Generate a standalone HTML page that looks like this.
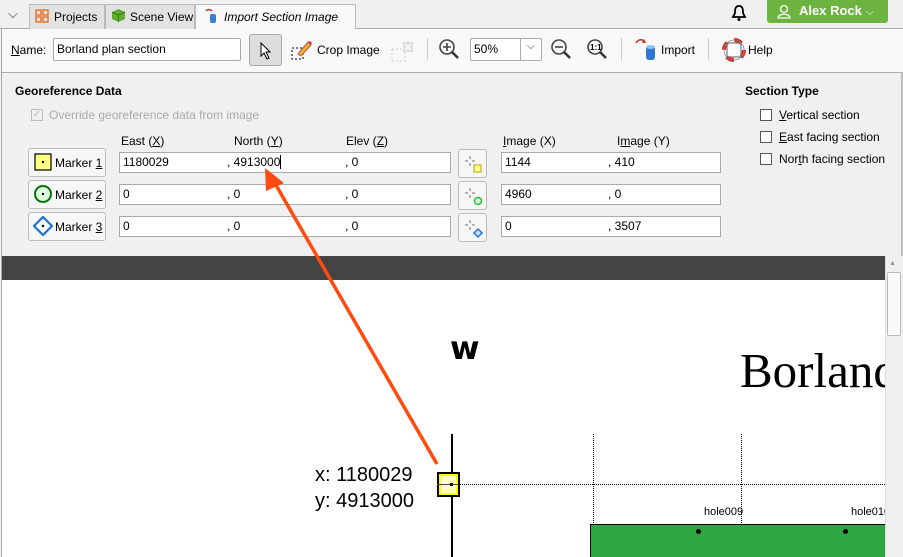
<!DOCTYPE html>
<html><head><meta charset="utf-8"><style>
*{box-sizing:border-box;margin:0;padding:0}
body{width:903px;height:557px;overflow:hidden;background:#f0f0f0;font-family:"Liberation Sans",sans-serif;font-size:12px;color:#000;position:relative}
.a{position:absolute}
.tab{position:absolute;top:4px;height:25px;border:1px solid #bbb;border-bottom:none;background:#e2e2e2;font-size:12px;line-height:24px;padding-left:24px}
.inp{position:absolute;height:21px;background:#fff;border:1px solid #aaa;font-size:12px;line-height:19px;padding-left:3px}
.btn{position:absolute;background:#f6f6f6;border:1px solid #bbb;border-radius:3px}
.lab{position:absolute;font-size:12px}
u{text-decoration:underline}
</style></head><body>
<div class="a" style="left:0;top:0;width:903px;height:29px;background:#f0f0f0;border-bottom:1px solid #aaa"></div>
<div class="a" style="left:8px;top:6px;font-size:13px;color:#333">⌵</div>
<div class="tab" style="left:29px;width:76px">Projects</div>
<svg class="a" style="left:35px;top:9px" width="14" height="14"><g fill="none" stroke="#e8752a" stroke-width="1.5"><rect x="1" y="1" width="5" height="5"/><rect x="8" y="1" width="5" height="5"/><rect x="1" y="8" width="5" height="5"/><rect x="8" y="8" width="5" height="5"/></g></svg>
<div class="tab" style="left:105px;width:90px">Scene View</div>
<svg class="a" style="left:111px;top:8px" width="15" height="15"><path d="M7.5 1 L14 4 L14 11 L7.5 14 L1 11 L1 4Z" fill="#5fae2e"/><path d="M1 4 L7.5 7 L14 4 M7.5 7 V14" stroke="#3d7c1a" fill="none"/></svg>
<div class="tab" style="left:195px;width:161px;background:#f8f8f8;height:27px;font-style:italic;padding-left:28px">Import Section Image <span style="font-style:normal;margin-left:4px">✕</span></div>
<svg class="a" style="left:204px;top:8px" width="14" height="16"><path d="M2 3 Q5 0 8 3" stroke="#c0392b" fill="none" stroke-width="1.5"/><rect x="6" y="6" width="6" height="9" rx="2" fill="#3a7fd0"/></svg>
<svg class="a" style="left:731px;top:4px" width="16" height="18"><path d="M8 2 C4 2 4 6 4 9 L2 13 H14 L12 9 C12 6 12 2 8 2Z" fill="none" stroke="#000" stroke-width="1.8"/><circle cx="8" cy="15.5" r="1.5"/></svg>
<div class="a" style="left:767px;top:0;width:121px;height:23px;background:#6cb33f;border-radius:0 0 3px 3px;color:#fff;font-weight:bold;font-size:13px;line-height:22px;padding-left:32px">Alex Rock <span style="font-weight:normal;font-size:11px">⌵</span></div>
<svg class="a" style="left:777px;top:4px" width="14" height="15"><circle cx="7" cy="5" r="3.5" fill="none" stroke="#fff" stroke-width="1.3"/><path d="M1 14 C1 9 13 9 13 14Z" fill="none" stroke="#fff" stroke-width="1.3"/></svg>
<div class="a" style="left:1px;top:29px;width:902px;height:43px;background:#f8f8f8;border-left:1px solid #aaa"></div>
<div class="lab" style="left:11px;top:43px"><u>N</u>ame:</div>
<div class="inp" style="left:53px;top:38px;width:188px;height:23px;border-radius:2px;line-height:21px">Borland plan section</div>
<div class="btn" style="left:249px;top:34px;width:33px;height:32px;background:#ddd;border-color:#aaa"></div>
<svg class="a" style="left:259px;top:42px" width="14" height="18"><path d="M2 1 L2 14 L5 11 L8 17 L10 16 L7 10 L11 10Z" fill="#fff" stroke="#000"/></svg>
<svg class="a" style="left:290px;top:38px" width="24" height="24"><rect x="2" y="10" width="11" height="11" fill="none" stroke="#000" stroke-dasharray="2,2"/><path d="M8 16 L18 4 L21 7 L11 18Z" fill="#f5b324" stroke="#a55"/><path d="M18 4 L21 7 L22 5 L20 3Z" fill="#d33"/></svg>
<div class="lab" style="left:317px;top:43px">Crop Image</div>
<svg class="a" style="left:391px;top:41px" width="24" height="22"><rect x="1" y="8" width="13" height="12" fill="none" stroke="#ccc" stroke-dasharray="2,2"/><rect x="12" y="1" width="10" height="10" fill="#ddd"/><path d="M14 3 L20 9 M20 3 L14 9" stroke="#fff" stroke-width="1.5"/></svg>
<div class="a" style="left:427px;top:38px;width:1px;height:22px;background:#ccc"></div>
<svg class="a" style="left:438px;top:38px" width="24" height="24"><circle cx="9" cy="9" r="7" fill="none" stroke="#444" stroke-width="1.6"/><path d="M5 9 H13 M9 5 V13" stroke="#444" stroke-width="1.6"/><path d="M14 14 L20 20" stroke="#333" stroke-width="2.5"/></svg>
<div class="inp" style="left:470px;top:38px;width:72px;height:23px;border-radius:2px;line-height:21px">50%</div>
<div class="a" style="left:520px;top:39px;width:1px;height:21px;background:#aaa"></div>
<div class="a" style="left:527px;top:41px;font-size:10px;color:#333">⌵</div>
<svg class="a" style="left:550px;top:38px" width="24" height="24"><circle cx="9" cy="9" r="7" fill="none" stroke="#444" stroke-width="1.6"/><path d="M5 9 H13" stroke="#444" stroke-width="1.6"/><path d="M14 14 L20 20" stroke="#333" stroke-width="2.5"/></svg>
<svg class="a" style="left:586px;top:38px" width="24" height="24"><circle cx="9" cy="9" r="7" fill="none" stroke="#444" stroke-width="1.6"/><text x="4" y="12" font-size="8" font-family="Liberation Sans" font-weight="bold">1:1</text><path d="M14 14 L20 20" stroke="#333" stroke-width="2.5"/></svg>
<div class="a" style="left:621px;top:38px;width:1px;height:22px;background:#ccc"></div>
<svg class="a" style="left:633px;top:37px" width="26" height="26"><path d="M3 6 Q7 0 12 5" stroke="#c0392b" fill="none" stroke-width="1.6"/><path d="M11 2 L13 6 L9 6Z" fill="#c0392b"/><rect x="13" y="9" width="9" height="14" rx="3" fill="#2f78d0"/><ellipse cx="17.5" cy="10" rx="4.5" ry="2" fill="#8ec1ff"/></svg>
<div class="lab" style="left:661px;top:43px">Import</div>
<div class="a" style="left:708px;top:38px;width:1px;height:22px;background:#ccc"></div>
<svg class="a" style="left:722px;top:38px" width="24" height="24"><circle cx="12" cy="12" r="10" fill="#fff" stroke="#d22" stroke-width="4" stroke-dasharray="8,7.7"/><circle cx="12" cy="12" r="10" fill="none" stroke="#888" stroke-width="0.8"/><rect x="5" y="5" width="14" height="14" fill="none" stroke="#777" stroke-width="1.2"/></svg>
<div class="lab" style="left:748px;top:43px">Help</div>
<div class="a" style="left:1px;top:72px;width:902px;height:184px;background:#f0f0f0;border-top:1px solid #aaa;border-left:1px solid #aaa"></div>
<div class="lab" style="left:15px;top:84px;font-weight:bold">Georeference Data</div>
<div class="a" style="left:31px;top:109px;width:12px;height:12px;border:1px solid #bbb;color:#bbb;font-size:10px;line-height:10px;text-align:center">✓</div>
<div class="lab" style="left:49px;top:108px;color:#aaa">Override georeference data from image</div>
<div class="lab" style="left:121px;top:134px">East (<u>X</u>)</div>
<div class="lab" style="left:234px;top:134px">North (<u>Y</u>)</div>
<div class="lab" style="left:346px;top:134px">Elev (<u>Z</u>)</div>
<div class="lab" style="left:503px;top:134px"><u>I</u>mage (X)</div>
<div class="lab" style="left:617px;top:134px">I<u>m</u>age (Y)</div>
<div class="btn" style="left:28px;top:148px;width:78px;height:29px"></div>
<div class="btn" style="left:28px;top:180px;width:78px;height:29px"></div>
<div class="btn" style="left:28px;top:212px;width:78px;height:29px"></div>
<svg class="a" style="left:33px;top:152px" width="20" height="20"><rect x="2" y="2" width="16" height="16" fill="#ffff80" stroke="#000" stroke-width="1.2"/><circle cx="10" cy="10" r="1.2"/></svg>
<svg class="a" style="left:33px;top:184px" width="20" height="20"><circle cx="10" cy="10" r="8" fill="#dfd" stroke="#2a2" stroke-width="2.2"/><circle cx="10" cy="10" r="8" fill="none" stroke="#000" stroke-width="0.6"/><circle cx="10" cy="10" r="1.2"/></svg>
<svg class="a" style="left:33px;top:216px" width="20" height="20"><path d="M10 1 L19 10 L10 19 L1 10Z" fill="#fff" stroke="#1a6fd6" stroke-width="2.2"/><circle cx="10" cy="10" r="1.2"/></svg>
<div class="lab" style="left:55px;top:156px">Marker <u>1</u></div>
<div class="lab" style="left:55px;top:188px">Marker <u>2</u></div>
<div class="lab" style="left:55px;top:220px">Marker <u>3</u></div>
<div class="inp" style="left:119px;top:152px;width:332px">1180029<span class="a" style="left:107px">, 4913000<span style="display:inline-block;width:1px;height:14px;background:#000;vertical-align:-3px"></span></span><span class="a" style="left:225px">, 0</span></div>
<div class="inp" style="left:119px;top:184px;width:332px">0<span class="a" style="left:107px">, 0</span><span class="a" style="left:225px">, 0</span></div>
<div class="inp" style="left:119px;top:216px;width:332px">0<span class="a" style="left:107px">, 0</span><span class="a" style="left:225px">, 0</span></div>
<div class="btn" style="left:458px;top:149px;width:29px;height:29px"></div>
<div class="btn" style="left:458px;top:181px;width:29px;height:29px"></div>
<div class="btn" style="left:458px;top:213px;width:29px;height:29px"></div>
<svg class="a" style="left:462px;top:153px" width="22" height="22"><path d="M8 3 V6 M8 10 V13 M3 8 H6 M10 8 H13" stroke="#777"/><rect x="12" y="12" width="7" height="7" fill="#ffff90" stroke="#aa0"/></svg>
<svg class="a" style="left:462px;top:185px" width="22" height="22"><path d="M8 3 V6 M8 10 V13 M3 8 H6 M10 8 H13" stroke="#777"/><circle cx="16" cy="16" r="3.5" fill="#dfd" stroke="#3b3" stroke-width="1.5"/></svg>
<svg class="a" style="left:462px;top:217px" width="22" height="22"><path d="M8 3 V6 M8 10 V13 M3 8 H6 M10 8 H13" stroke="#777"/><path d="M16 12 L20 16 L16 20 L12 16Z" fill="#cdf" stroke="#27d" stroke-width="1.5"/></svg>
<div class="inp" style="left:501px;top:152px;width:220px">1144<span class="a" style="left:106px">, 410</span></div>
<div class="inp" style="left:501px;top:184px;width:220px">4960<span class="a" style="left:106px">, 0</span></div>
<div class="inp" style="left:501px;top:216px;width:220px">0<span class="a" style="left:106px">, 3507</span></div>
<div class="lab" style="left:745px;top:84px;font-weight:bold">Section Type</div>
<div class="a" style="left:760px;top:109px;width:12px;height:12px;border:1px solid #555;background:#fff"></div>
<div class="a" style="left:760px;top:131px;width:12px;height:12px;border:1px solid #555;background:#fff"></div>
<div class="a" style="left:760px;top:153px;width:12px;height:12px;border:1px solid #555;background:#fff"></div>
<div class="lab" style="left:779px;top:108px"><u>V</u>ertical section</div>
<div class="lab" style="left:779px;top:130px"><u>E</u>ast facing section</div>
<div class="lab" style="left:779px;top:152px">Nor<u>t</u>h facing section</div>
<div class="a" style="left:901px;top:72px;width:2px;height:184px;background:#bbb"></div>
<div class="a" style="left:1px;top:256px;width:884px;height:301px;background:#fff;border-left:1px solid #aaa"></div>
<div class="a" style="left:2px;top:256px;width:883px;height:24px;background:#444"></div>
<div class="a" style="left:885px;top:256px;width:18px;height:301px;background:#f0f0f0;border-left:1px solid #ddd"></div>
<div class="a" style="left:887px;top:272px;width:14px;height:64px;background:#fafafa;border:1px solid #bbb;border-radius:2px"></div>
<div class="a" style="left:889px;top:260px;font-size:7px;color:#999">▲</div>
<div class="a" style="left:450px;top:330px;font-family:'DejaVu Sans',sans-serif;font-weight:bold;font-size:32px;line-height:36px">w</div>
<div class="a" style="left:740px;top:344px;font-family:'Liberation Serif',serif;font-size:49px;line-height:54px;width:145px;overflow:hidden;white-space:nowrap">Borland</div>
<div class="a" style="left:315px;top:462px;font-size:20px;line-height:26px">x: 1180029<br>y: 4913000</div>
<div class="a" style="left:451px;top:434px;width:2px;height:123px;background:#000"></div>
<div class="a" style="left:437px;top:484px;width:448px;border-top:1px dotted #000"></div>
<div class="a" style="left:593px;top:434px;height:123px;border-left:1px dotted #000"></div>
<div class="a" style="left:741px;top:434px;height:123px;border-left:1px dotted #000"></div>
<div class="a" style="left:590px;top:524px;width:295px;height:33px;background:#2ea641;border-top:1px solid #000;border-left:1px solid #000"></div>
<div class="a" style="left:696px;top:529px;width:5px;height:5px;border-radius:50%;background:#000"></div>
<div class="a" style="left:843px;top:529px;width:5px;height:5px;border-radius:50%;background:#000"></div>
<div class="lab" style="left:704px;top:506px;font-size:11px">hole009</div>
<div class="lab" style="left:851px;top:506px;font-size:11px;width:34px;overflow:hidden;white-space:nowrap">hole010</div>
<div class="a" style="left:437px;top:472px;width:23px;height:25px;background:#ffffc0;border:2px solid #000;outline:2px solid #ff0;outline-offset:-4px"></div>
<div class="a" style="left:437px;top:484px;width:22px;height:1px;background:#444"></div>
<div class="a" style="left:450px;top:483px;width:3px;height:3px;border:1px solid #000"></div>
<svg class="a" style="left:0;top:0" width="903" height="557"><path d="M437 464 L273 180" stroke="#ff4a10" stroke-width="3.5"/><path d="M265 168 L284 183 L266 191Z" fill="#ff4a10"/></svg>
</body></html>
